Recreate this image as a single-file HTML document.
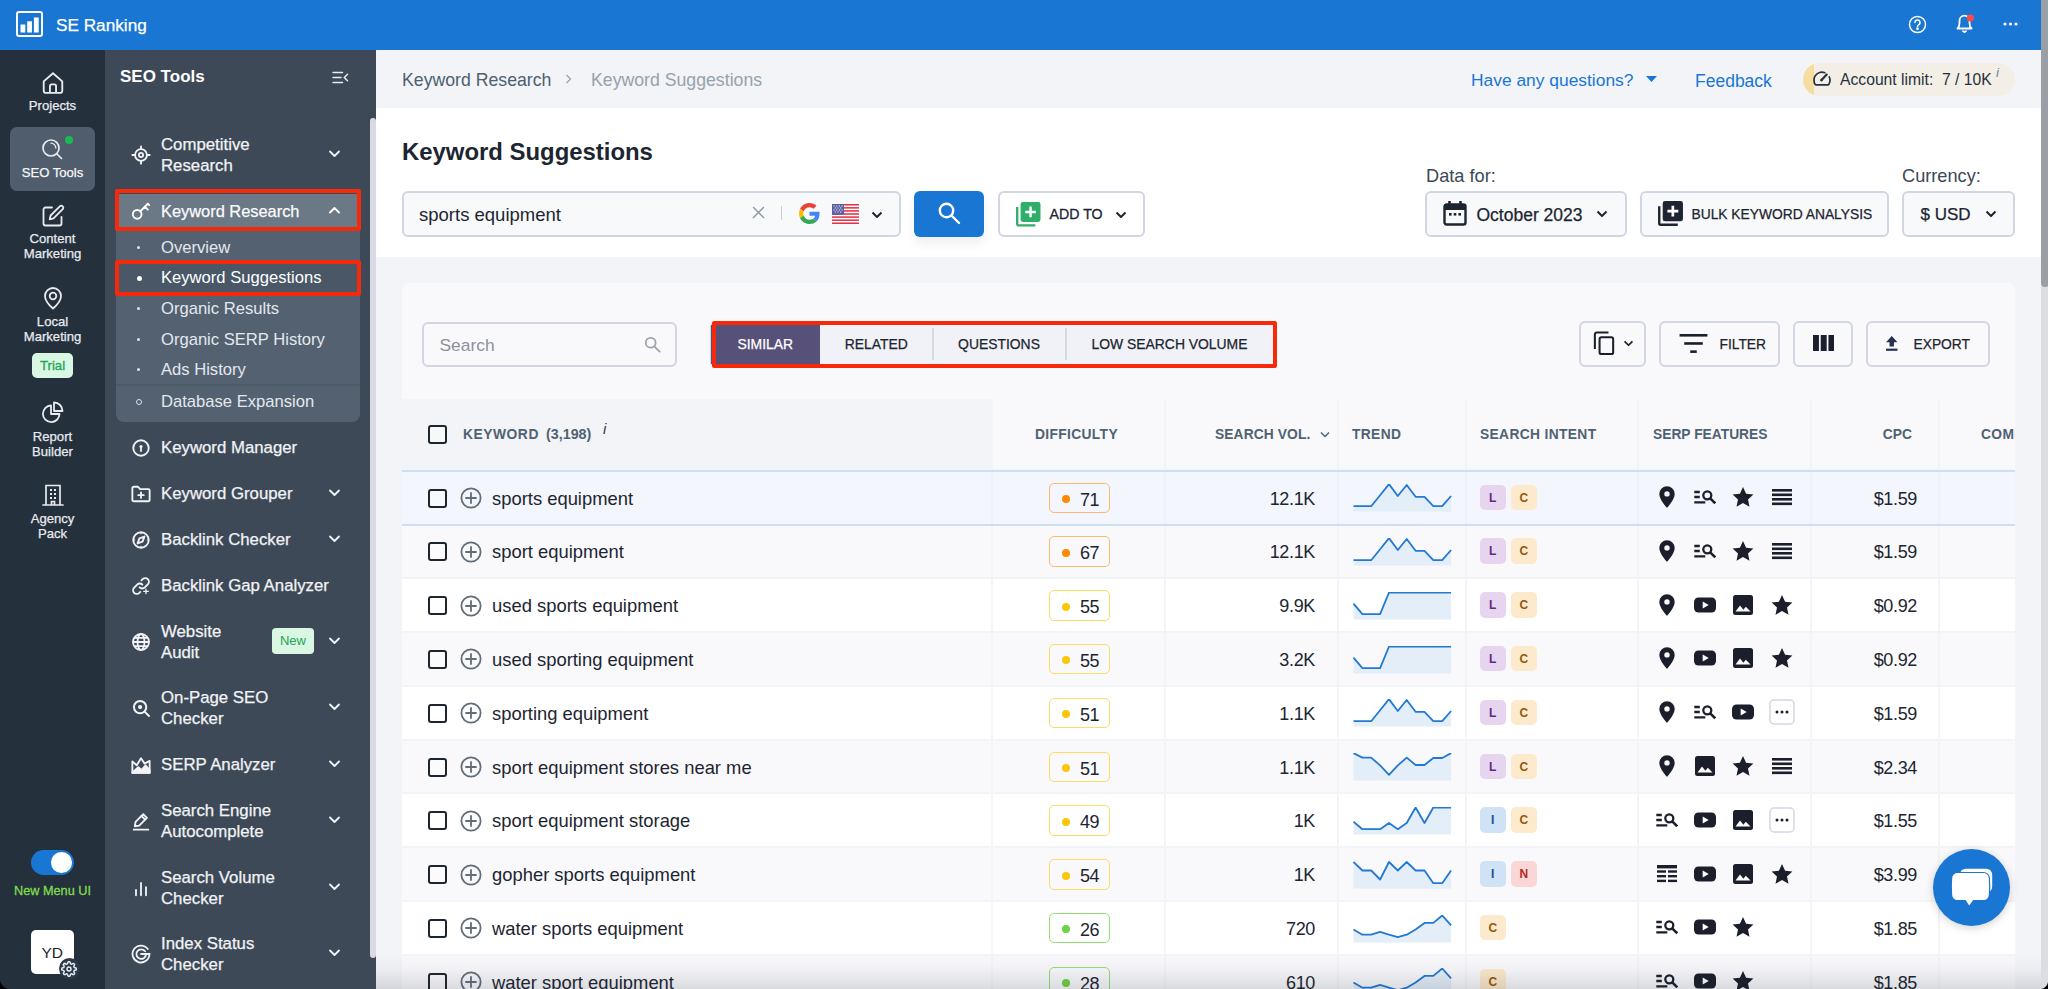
<!DOCTYPE html>
<html lang="en">
<head>
<meta charset="utf-8">
<title>Keyword Suggestions - SE Ranking</title>
<style>
*{box-sizing:border-box;margin:0;padding:0}
html,body{width:2048px;height:989px;overflow:hidden;background:#f3f4f8}
body{font-family:"Liberation Sans",sans-serif;color:#1c2530;position:relative}
svg{display:block}
.abs{position:absolute}
/* ---------- top bar ---------- */
#topbar{position:absolute;left:0;top:0;width:2041px;height:50px;background:#1976d2}
#topbar .logo{position:absolute;left:16px;top:11px;width:27px;height:26px}
#topbar .brand{position:absolute;left:56px;top:14px;font-size:17.2px;line-height:22px;color:#fff;white-space:nowrap;-webkit-text-stroke:.250px #fff}
#topbar .ticon{position:absolute;top:14px}
/* ---------- rail (left narrow sidebar) ---------- */
#rail{position:absolute;left:0;top:50px;width:105px;height:939px;background:#25303d}
#rail .item{position:absolute;left:0;width:105px;text-align:center;color:#e9ebef;font-size:13.1px;line-height:15.200px;-webkit-text-stroke:.250px #e9ebef}
#rail .item svg{margin:0 auto}
#rail .active{position:absolute;left:10px;top:76.500px;width:85px;height:64px;border-radius:7px;background:#4f5d6d}
#rail .trial{position:absolute;left:32px;top:302.500px;width:41px;height:25.500px;border-radius:5px;background:#d9f7e3;color:#22a457;font-size:13.200px;line-height:26px;text-align:center;-webkit-text-stroke:.300px #22a457}
#rail .toggle{position:absolute;left:30.500px;top:799.500px;width:43.500px;height:25.500px;border-radius:13px;background:#1976d2}
#rail .toggle i{position:absolute;right:2.200px;top:2.400px;width:20.700px;height:20.700px;border-radius:50%;background:#fff}
#rail .newui{position:absolute;left:0;top:833.500px;width:105px;text-align:center;color:#7fdc4f;font-size:12.700px;line-height:15px;-webkit-text-stroke:.300px #7fdc4f}
#rail .avatar{position:absolute;left:30.500px;top:880px;width:43.500px;height:44px;border-radius:5px;background:#fff;color:#1c2530;font-size:15.500px;line-height:46px;text-align:center}
#rail .gear{position:absolute;left:58.500px;top:908px;width:21px;height:21px;border-radius:50%;background:#2b394a}
#rail .gear svg{position:absolute;left:2.500px;top:2.500px;width:16px;height:16px}
.corner{position:absolute;bottom:0;width:10px;height:10px}
/* ---------- tools sidebar ---------- */
#tools{position:absolute;left:105px;top:50px;width:271px;height:939px;background:#3e4957}
#tools h2{position:absolute;left:15px;top:15.500px;font-size:17px;line-height:22px;font-weight:700;color:#fff;white-space:nowrap}
#tools .collapse{position:absolute;left:227px;top:21px}
#tools .sbtrack{position:absolute;left:265px;top:68px;width:6px;height:840px;border-radius:3px;background:#d9dae4}
#tools .sbwhite{position:absolute;left:265px;top:940px;width:6px;height:0;background:#fff}
.nav{list-style:none}
.nav>li{position:absolute;left:11px;width:244px;color:#f1f3f6;font-size:16.8px;line-height:20.5px;-webkit-text-stroke:.25px #f1f3f6}
.nav>li .ic{position:absolute;left:15px;top:50%;margin-top:-9.500px;width:20px;height:20px}
.nav>li .tx{position:absolute;left:45px;top:calc(50% + 1px);transform:translateY(-50%);white-space:nowrap}
.nav>li .chev{position:absolute;left:211.700px;top:50%;margin-top:-4px}
.nav .new{position:absolute;left:156px;top:50%;margin-top:-13px;width:42px;height:26px;border-radius:4px;background:#d9f7e3;color:#22a457;font-size:13px;line-height:26px;text-align:center;-webkit-text-stroke:0}
.sub{position:absolute;left:11px;top:180px;width:244px;height:192px;background:#536171;border-radius:0 0 8px 8px;list-style:none}
.sub li{position:absolute;left:0;width:244px;height:30px;color:#e4e8ee;font-size:16.6px;line-height:30px;padding-left:45px;white-space:nowrap}
.sub li b{position:absolute;left:21px;top:13px;width:3px;height:3px;border-radius:50%;background:#dfe3ea}
.redbox{position:absolute;border:3.5px solid #f7290b;border-radius:2px}

/* ---------- main ---------- */
#main{position:absolute;left:376px;top:50px;width:1665px;height:939px;background:#f3f4f8;overflow:hidden}
.crumbs{position:absolute;left:0;top:0;width:1665px;height:58px;font-size:17.7px;line-height:22px;white-space:nowrap}
.crumbs>*{position:absolute}
.crumbs .c1{left:26px;top:19px;color:#4b6070}
.crumbs .sep{left:189px;top:24px}
.crumbs .c2{left:215px;top:19px;color:#96a2ad}
.crumbs .q{left:1095px;top:19px;color:#1976d2;font-size:17.4px}
.crumbs .qcaret{left:1270px;top:26px}
.crumbs .fb{left:1319px;top:19.500px;color:#1976d2;font-size:17.5px}
.crumbs .limit{left:1427px;top:12.500px;width:212px;height:33.500px;border-radius:17px;background:#f3efe6;overflow:hidden;font-size:15.700px;line-height:34px;color:#27313e}
.limit>*{position:absolute}
.limit i{left:0;top:0;width:11px;height:34px;background:#f8dda0}
.limit svg{left:9.500px;top:8.500px}
.limit .l1{left:37px;top:0}
.limit .l2{left:139px;top:0}
.limit em{left:193px;top:-7px;font-size:13.500px;font-style:italic;color:#6b85a8}
.head{position:absolute;left:0;top:58px;width:1665px;height:149px;background:#fff}
.head>*{position:absolute}
.head h1{left:26px;top:28.500px;font-size:23.9px;line-height:30px;font-weight:700;color:#1c2530;white-space:nowrap}
.kwinput{left:25.500px;top:82.500px;width:499px;height:46px;border:2px solid #d2d5e4;border-radius:6px;background:#f8f9fb}
.kwinput>*{position:absolute}
.kwinput .val{left:15.500px;top:11.500px;font-size:18.5px;line-height:22px;color:#1c2530;white-space:nowrap}
.kwinput .x{left:348px;top:13.500px}
.kwinput .div{left:377px;top:13.500px;width:1px;height:14px;background:#c9cddb}
.kwinput .g{left:395.500px;top:10.500px}
.kwinput .flag{left:428.500px;top:11.500px}
.kwinput .cv{left:467px;top:18px}
.go{left:538px;top:82.500px;width:70px;height:46.500px;border:0;border-radius:6px;background:#1976d2;box-shadow:0 7px 10px rgba(20,40,80,.07)}
.go svg{position:absolute;left:23px;top:10px}
.btn{height:46px;top:82.500px;border:2px solid #d2d5e4;border-radius:6px;background:#f8f9fb;font-family:inherit;color:#1c2530;white-space:nowrap}
.btn>*{position:absolute}
.addto{left:621.500px;width:147px;font-size:14.200px;background:#fff;-webkit-text-stroke:.300px #1c2530}
.addto svg:first-child{left:15px;top:8px;width:26.500px;height:26.500px}
.addto span{left:50px;top:13.500px;line-height:17px}
.addto .cv{left:115px;top:18px}
.lb{top:56.500px;font-size:18.200px;line-height:22px;color:#3c4856;white-space:nowrap}
.date{left:1049px;width:202px;font-size:17.500px;-webkit-text-stroke:.250px #1c2530}
.date svg:first-child{left:16px;top:7px}
.date span{left:49.500px;top:12px;line-height:20px}
.date .cv{left:169px;top:17px}
.bulk{left:1264px;width:249px;font-size:13.800px;-webkit-text-stroke:.250px #1c2530}
.bulk svg:first-child{left:15px;top:7px}
.bulk span{left:49.500px;top:13px;line-height:17px}
.cur{left:1525.500px;width:113.500px;font-size:17px;-webkit-text-stroke:.250px #1c2530}
.cur span{left:17px;top:12px;line-height:20px}
.cur .cv{left:81px;top:17px}
/* ---------- window scrollbar ---------- */
#winsb{position:absolute;left:2041px;top:0;width:7px;height:989px;background:#dcdde2}
#winsb i{position:absolute;left:0;top:-6px;width:8px;height:293px;border-radius:4px;background:#999ea7}

/* ---------- card ---------- */
.card{position:absolute;left:26px;top:233px;width:1613px;height:720px;background:#f9f9fc;border-radius:7px 7px 0 0;overflow:hidden}
.tb{position:absolute;left:0;top:0;width:1613px;height:116px}
.tb>*{position:absolute}
.srch{left:19.500px;top:38.500px;width:255px;height:45px;border:2px solid #d3d5e3;border-radius:6px;background:#f9f9fc}
.srch span{position:absolute;left:16px;top:11.500px;font-size:17.400px;line-height:20px;color:#8b929e}
.srch svg{position:absolute;left:220px;top:12px}
.tabs{left:307.500px;top:39px;width:566px;height:45px;border:1.500px solid #d0d3e1;border-radius:4px;background:#f1f2f7;padding:1.500px 0 0 0;display:flex;font-size:13.900px;line-height:38px;color:#1c2530;text-align:center;white-space:nowrap;-webkit-text-stroke:.250px #1c2530}
.tabs a{display:block;height:39px;line-height:39.500px;position:relative}
.tabs a+a+a::before,.tabs a+a+a+a::before{content:"";position:absolute;left:-1px;top:3px;width:2px;height:32px;background:#d5d8e5}
.tabs a.on{background:#57517a;color:#fff;-webkit-text-stroke:.250px #fff}
.tbtn{top:38px;height:46px;border:2px solid #d3d6e5;border-radius:6px;background:#f9f9fc;font-family:inherit;font-size:13.800px;color:#1c2530;-webkit-text-stroke:.250px #1c2530}
.tbtn>*{position:absolute}
.tbtn span{top:13px;line-height:17px}
.thead{position:absolute;left:0;top:116px;width:1613px;height:72px;background:#f3f4f8}
.th{position:absolute;top:0;height:70px;background:#f9f9fc;font-size:13.800px;font-weight:700;color:#4f6272;letter-spacing:.350px;white-space:nowrap}
.th.kw{background:#f3f4f8}
.th span{position:absolute;top:27px;line-height:17px}
.th em{position:absolute;left:201px;top:23px;font-size:15px;line-height:14px;font-weight:400;font-style:italic;color:#2f3b48}
.cb{position:absolute;width:19px;height:19px;border:2.200px solid #1c2530;border-radius:3px;background:rgba(255,255,255,.35)}
.tbody-bg{position:absolute;left:0;top:116px;width:1613px;height:620px;background:#f3f4f8}
.tr{position:absolute;left:0;width:1613px;height:51.850px;background:#f3f4f8}
.td{position:absolute;top:0;height:51.850px;background:#fff}
.tr.alt .td{background:#f9f9fc}
.tr.hov{z-index:2;top:187px !important;height:56px;border-top:2px solid #cbdff5;border-bottom:2px solid #cbdff5;background:#eef2f9}
.tr.hov .td{background:#f3f6fc;top:-.500px;height:52.500px}
.plus{position:absolute;left:58px;top:15.500px;width:22px;height:22px}
.kwt{position:absolute;left:90px;top:16.200px;font-size:18.400px;line-height:22px;color:#1c2530;white-space:nowrap}
.num{position:absolute;top:16px;letter-spacing:-.350px;font-size:18px;line-height:22px;color:#1c2530;white-space:nowrap}
.df{position:absolute;left:56px;top:11px;width:61px;height:30.500px;border:1.500px solid;border-radius:5px;font-size:18px;letter-spacing:-.500px;line-height:33.500px;padding-left:30px;color:#1c2530}
.df b{position:absolute;left:11.500px;top:11.500px;width:8px;height:8px;border-radius:50%}
.do{border-color:#fbb972}.do b{background:#ff8a00}
.dy{border-color:#fbdc64}.dy b{background:#fac70a}
.dg{border-color:#93de73}.dg b{background:#6fd146}
.sp{position:absolute;left:14px;top:12.700px}
.in{position:absolute;top:13px;width:25.500px;height:25.500px;border-radius:5px;font-size:12px;line-height:26px;text-align:center;font-weight:700}
.iL{background:#e7d5f0;color:#5e2b88}.iC{background:#fde9cb;color:#935a0c}.iI{background:#cfe2f6;color:#1d4f8e}.iN{background:#fbd6d6;color:#b4281f}
.sf{position:absolute;top:14.500px;width:22px;height:22px}
.si{width:22px;height:22px}
.fade{position:absolute;left:0;top:903px;width:1665px;height:36px;background:linear-gradient(rgba(30,36,50,0),rgba(30,36,50,.035) 45%,rgba(30,36,50,.14))}
.chat{position:absolute;left:1557px;top:798.500px;width:77px;height:77px;border-radius:50%;background:#1976d2;box-shadow:0 2px 8px rgba(0,0,0,.18)}
.chat svg{position:absolute;left:16px;top:19px}
</style>
</head>
<body>

<!-- ================= TOP BAR ================= -->
<header id="topbar">
  <svg class="logo" viewBox="0 0 27 26"><rect x="1" y="1" width="25" height="24" rx="2" fill="none" stroke="#fff" stroke-width="2"/><rect x="4.5" y="13.5" width="4.8" height="8" fill="#fff"/><rect x="11.2" y="10.3" width="4.8" height="11.2" fill="#fff"/><rect x="17.9" y="6.5" width="4.8" height="15" fill="#fff"/></svg>
  <div class="brand">SE Ranking</div>
  <svg class="ticon" style="left:1908px;top:15px" width="19" height="19" viewBox="0 0 19 19" fill="none" stroke="#fff" stroke-width="1.5"><circle cx="9.5" cy="9.5" r="8"/><path d="M7 7.6a2.5 2.5 0 1 1 3.6 2.2c-.7.4-1.1.8-1.1 1.7" stroke-linecap="round"/><circle cx="9.5" cy="13.7" r=".6" fill="#fff"/></svg>
  <svg class="ticon" style="left:1953.500px;top:12px" width="22" height="22" viewBox="0 0 22 22" fill="none" stroke="#fff" stroke-width="1.800"><path d="M3.500 16.500h14c-1.400-1.400-2-2.800-2-5.600V8.600a5 5 0 0 0-10 0v2.300c0 2.800-.600 4.200-2 5.600z" stroke-linejoin="round"/><path d="M9 19.200c.9.900 2.100.900 3 0" stroke-linecap="round"/><circle cx="16.300" cy="6" r="3.600" fill="#ff4a4a" stroke="none"/></svg>
  <svg class="ticon" style="left:2003px;top:22px" width="15" height="4" viewBox="0 0 15 4" fill="#fff"><circle cx="2" cy="2" r="1.6"/><circle cx="7.5" cy="2" r="1.6"/><circle cx="13" cy="2" r="1.6"/></svg>
</header>

<!-- ================= RAIL ================= -->
<nav id="rail">
  <div class="active"></div>
  <div class="item" style="top:21px"><svg width="24" height="24" viewBox="0 0 22 22" fill="none" stroke="#e9ebef" stroke-width="1.7" stroke-linejoin="round"><path d="M2.500 9.500 11 2l8.500 7.500V18a2 2 0 0 1-2 2h-13a2 2 0 0 1-2-2z"/><path d="M8.200 20v-6.200a1.500 1.500 0 0 1 1.500-1.500h2.600a1.500 1.500 0 0 1 1.500 1.500V20"/></svg><div style="margin-top:3px">Projects</div></div>
  <div class="item" style="top:88px;color:#fff"><svg width="24" height="22" viewBox="0 0 24 22" fill="none" stroke="#e9ebef" stroke-width="1.700" stroke-linecap="round"><circle cx="10" cy="10" r="8"/><path d="M16 16l4.500 4.500"/><path d="M10 5.200a4.800 4.800 0 0 1 4.800 4.800" stroke-width="1.300"/></svg><div style="margin-top:5px">SEO Tools</div></div>
  <div class="abs" style="left:65px;top:86px;width:8px;height:8px;border-radius:50%;background:#1db954"></div>
  <div class="item" style="top:154px"><svg width="24" height="24" viewBox="0 0 24 24" fill="none" stroke="#e9ebef" stroke-width="1.800" stroke-linecap="round" stroke-linejoin="round"><path d="M11 3.500H4.500a2 2 0 0 0-2 2v14a2 2 0 0 0 2 2h14a2 2 0 0 0 2-2V13"/><path d="M18.800 2.300a2 2 0 0 1 2.900 2.900L12.500 14.400 8.700 15.300l.9-3.800z"/></svg><div style="margin-top:3px">Content<br>Marketing</div></div>
  <div class="item" style="top:236px"><svg width="20" height="24" viewBox="0 0 20 24" fill="none" stroke="#e9ebef" stroke-width="1.800" stroke-linejoin="round"><path d="M10 22.500s8-6.800 8-12.500a8 8 0 0 0-16 0c0 5.700 8 12.500 8 12.500z"/><circle cx="10" cy="10" r="3.300"/></svg><div style="margin-top:3.500px">Local<br>Marketing</div></div>
  <div class="trial">Trial</div>
  <div class="item" style="top:351px"><svg width="23" height="23" viewBox="0 0 23 23" fill="none" stroke="#e9ebef" stroke-width="1.800" stroke-linejoin="round"><path d="M10 4.500a8.300 8.300 0 1 0 8.500 8.500H10z"/><path d="M13 1.500V10h8.500A8.500 8.500 0 0 0 13 1.500z"/></svg><div style="margin-top:5px">Report<br>Builder</div></div>
  <div class="item" style="top:433px"><svg width="24" height="24" viewBox="0 0 24 24" fill="none" stroke="#e9ebef" stroke-width="1.700"><path d="M5 22V2.500h14V22"/><path d="M2 22h20" stroke-linecap="round"/><path d="M9 7h2M13 7h2M9 11h2M13 11h2M9 15h2M13 15h2" stroke-width="2"/><path d="M10.500 22v-3.500h3V22"/></svg><div style="margin-top:3.500px">Agency<br>Pack</div></div>
  <div class="toggle"><i></i></div>
  <div class="newui">New Menu UI</div>
  <div class="avatar">YD</div>
  <div class="gear"><svg width="16" height="16" viewBox="0 0 24 24" fill="none" stroke="#e9ebef" stroke-width="2.200" stroke-linejoin="round"><circle cx="12" cy="12" r="3"/><path d="M19.400 15a1.650 1.650 0 0 0 .33 1.820l.06.06a2 2 0 1 1-2.830 2.830l-.06-.06a1.650 1.650 0 0 0-1.820-.33 1.650 1.650 0 0 0-1 1.510V21a2 2 0 1 1-4 0v-.09A1.650 1.650 0 0 0 9 19.400a1.650 1.650 0 0 0-1.820.33l-.06.06a2 2 0 1 1-2.830-2.830l.06-.06a1.650 1.650 0 0 0 .33-1.820 1.650 1.650 0 0 0-1.510-1H3a2 2 0 1 1 0-4h.09A1.650 1.650 0 0 0 4.600 9a1.650 1.650 0 0 0-.33-1.820l-.06-.06a2 2 0 1 1 2.830-2.830l.06.06a1.650 1.650 0 0 0 1.820.33H9a1.650 1.650 0 0 0 1-1.510V3a2 2 0 1 1 4 0v.09a1.650 1.650 0 0 0 1 1.510 1.650 1.650 0 0 0 1.820-.33l.06-.06a2 2 0 1 1 2.830 2.830l-.06.06a1.650 1.650 0 0 0-.33 1.820V9a1.650 1.650 0 0 0 1.510 1H21a2 2 0 1 1 0 4h-.09a1.650 1.650 0 0 0-1.510 1z"/></svg></div>
</nav>

<!-- ================= TOOLS SIDEBAR ================= -->
<aside id="tools">
  <h2>SEO Tools</h2>
  <svg class="collapse" width="17" height="13" viewBox="0 0 17 13" fill="none" stroke="#e9ebef" stroke-width="1.500" stroke-linecap="round"><path d="M1 1.500h9.500M1 6.500h8M1 11.500h9.500M15.500 3.300 12.300 6.500l3.200 3.200"/></svg>
  <div class="sbtrack"></div>
  <ul class="nav">
    <li style="top:76px;height:56px"><svg class="ic" viewBox="0 0 22 22" fill="none" stroke="#f1f3f6" stroke-width="2.050" stroke-linecap="round"><circle cx="11" cy="11" r="6.500"/><circle cx="11" cy="11" r="2.300"/><path d="M11 1.500v3M11 17.500v3M1.500 11h3M17.500 11h3"/></svg><span class="tx">Competitive<br>Research</span><svg class="chev" width="13" height="8" viewBox="0 0 13 8" fill="none" stroke="#f1f3f6" stroke-width="1.800" stroke-linecap="round" stroke-linejoin="round"><path d="M2 1.500 6.500 6 11 1.500"/></svg></li>
    <li style="top:143.500px;height:33.500px;background:#6b7886;color:#fff;font-size:16.400px"><svg class="ic" viewBox="0 0 22 22" fill="none" stroke="#fff" stroke-width="2.050" stroke-linecap="round" stroke-linejoin="round"><circle cx="6.800" cy="14.700" r="4.800"/><path d="M10.300 11.300 18.500 3M15.300 6.200l3.200 3.200M18.500 3l1.500 1.500"/></svg><span class="tx">Keyword Research</span><svg class="chev" width="13" height="8" viewBox="0 0 13 8" fill="none" stroke="#fff" stroke-width="1.800" stroke-linecap="round" stroke-linejoin="round"><path d="M2 6.500 6.500 2 11 6.500"/></svg></li>
  </ul>
  <ul class="sub">
    <li style="top:3px"><b></b>Overview</li>
    <li style="top:33px;background:#4a5767;color:#fff"><b style="left:20.500px;top:12.500px;width:5px;height:5px;background:#fff"></b>Keyword Suggestions</li>
    <li style="top:64px"><b></b>Organic Results</li>
    <li style="top:95px"><b></b>Organic SERP History</li>
    <li style="top:125px"><b></b>Ads History</li>
    <li style="top:154px;height:37px;line-height:32px;border-top:2px solid #4c5967;border-radius:0 0 8px 8px"><b style="left:20px;top:13px;width:6px;height:6px;background:none;border:1px solid #dfe3ea"></b>Database Expansion</li>
  </ul>
  <div class="redbox" style="left:10px;top:138.800px;width:246px;height:42.500px;border-width:4px"></div>
  <div class="redbox" style="left:10px;top:210.300px;width:246px;height:36px;border-width:4px"></div>
  <ul class="nav">
    <li style="top:377px;height:40px"><svg class="ic" viewBox="0 0 22 22" fill="none" stroke="#f1f3f6" stroke-width="2.050" stroke-linecap="round"><circle cx="11" cy="11" r="8.500"/><circle cx="11" cy="9.300" r="1.700" fill="#f1f3f6" stroke="none"/><path d="M11 10v4.300" stroke-width="2"/></svg><span class="tx">Keyword Manager</span></li>
    <li style="top:423px;height:40px"><svg class="ic" viewBox="0 0 22 22" fill="none" stroke="#f1f3f6" stroke-width="2.050" stroke-linecap="round" stroke-linejoin="round"><path d="M1.500 4.500a1.500 1.500 0 0 1 1.500-1.500h4.500l2.500 2.700h9a1.500 1.500 0 0 1 1.500 1.500v10.300a1.500 1.500 0 0 1-1.500 1.500h-16a1.500 1.500 0 0 1-1.500-1.500z"/><path d="M11 9.300v6M8 12.300h6"/></svg><span class="tx">Keyword Grouper</span><svg class="chev" width="13" height="8" viewBox="0 0 13 8" fill="none" stroke="#f1f3f6" stroke-width="1.800" stroke-linecap="round" stroke-linejoin="round"><path d="M2 1.500 6.500 6 11 1.500"/></svg></li>
    <li style="top:469px;height:40px"><svg class="ic" viewBox="0 0 22 22" fill="none" stroke="#f1f3f6" stroke-width="2.050" stroke-linecap="round" stroke-linejoin="round"><circle cx="11" cy="11" r="8.500"/><path d="M14.800 7.200 12.700 12.700 7.200 14.800 9.300 9.300z"/><path d="M11 2.500v1.500M11 18v1.500M2.500 11H4M18 11h1.500" stroke-width="1.300"/></svg><span class="tx">Backlink Checker</span><svg class="chev" width="13" height="8" viewBox="0 0 13 8" fill="none" stroke="#f1f3f6" stroke-width="1.800" stroke-linecap="round" stroke-linejoin="round"><path d="M2 1.500 6.500 6 11 1.500"/></svg></li>
    <li style="top:515px;height:40px"><svg class="ic" viewBox="0 0 22 22" fill="none" stroke="#f1f3f6" stroke-width="2.050" stroke-linecap="round" stroke-linejoin="round"><path d="M9.500 12.500a4 4 0 0 0 5.700 0l3.300-3.300a4 4 0 0 0-5.700-5.700l-1.300 1.300"/><path d="M12.500 9.500a4 4 0 0 0-5.700 0l-3.300 3.300a4 4 0 0 0 5.700 5.700l1-1"/><path d="M16.500 14.500v5M14 17h5" stroke-width="1.400"/></svg><span class="tx">Backlink Gap Analyzer</span></li>
    <li style="top:563px;height:56px"><svg class="ic" viewBox="0 0 22 22" fill="none" stroke="#f1f3f6" stroke-width="1.950" stroke-linecap="round"><circle cx="11" cy="11" r="8.800"/><ellipse cx="11" cy="11" rx="3.800" ry="8.800"/><path d="M2.500 11h17M3.800 6.500h14.400M3.800 15.500h14.400"/></svg><span class="tx">Website<br>Audit</span><span class="new">New</span><svg class="chev" width="13" height="8" viewBox="0 0 13 8" fill="none" stroke="#f1f3f6" stroke-width="1.800" stroke-linecap="round" stroke-linejoin="round"><path d="M2 1.500 6.500 6 11 1.500"/></svg></li>
    <li style="top:629px;height:56px"><svg class="ic" viewBox="0 0 22 22" fill="none" stroke="#f1f3f6" stroke-width="2.200" stroke-linecap="round"><circle cx="10" cy="10" r="6.800"/><path d="M15 15l4.800 4.800"/><circle cx="10" cy="10" r="2.300" fill="#f1f3f6" stroke="none"/></svg><span class="tx">On-Page SEO<br>Checker</span><svg class="chev" width="13" height="8" viewBox="0 0 13 8" fill="none" stroke="#f1f3f6" stroke-width="1.800" stroke-linecap="round" stroke-linejoin="round"><path d="M2 1.500 6.500 6 11 1.500"/></svg></li>
    <li style="top:694px;height:40px"><svg class="ic" viewBox="0 0 22 22" fill="none" stroke="#f1f3f6" stroke-width="2.050" stroke-linejoin="round"><path d="M1.500 19.500V7l4.800 4.300L11 3.500l4 6 5.500-3v13z"/><path d="M2 19 8 13.500l3.500 3 4.500-5 4.500 5V19.500H1.500z" fill="#f1f3f6"/></svg><span class="tx">SERP Analyzer</span><svg class="chev" width="13" height="8" viewBox="0 0 13 8" fill="none" stroke="#f1f3f6" stroke-width="1.800" stroke-linecap="round" stroke-linejoin="round"><path d="M2 1.500 6.500 6 11 1.500"/></svg></li>
    <li style="top:742px;height:56px"><svg class="ic" viewBox="0 0 22 22" fill="none" stroke="#f1f3f6" stroke-width="2.050" stroke-linecap="round" stroke-linejoin="round"><path d="M13.500 3.500 17.500 7.500 9 16l-4.800.8L5 12z"/><path d="M11.500 5.500l4 4"/><path d="M3 20.500h16"/></svg><span class="tx">Search Engine<br>Autocomplete</span><svg class="chev" width="13" height="8" viewBox="0 0 13 8" fill="none" stroke="#f1f3f6" stroke-width="1.800" stroke-linecap="round" stroke-linejoin="round"><path d="M2 1.500 6.500 6 11 1.500"/></svg></li>
    <li style="top:809px;height:56px"><svg class="ic" viewBox="0 0 22 22" fill="none" stroke="#f1f3f6" stroke-width="2" stroke-linecap="round"><path d="M5.500 13v6M11 5.500V19M16.500 10v9"/></svg><span class="tx">Search Volume<br>Checker</span><svg class="chev" width="13" height="8" viewBox="0 0 13 8" fill="none" stroke="#f1f3f6" stroke-width="1.800" stroke-linecap="round" stroke-linejoin="round"><path d="M2 1.500 6.500 6 11 1.500"/></svg></li>
    <li style="top:875px;height:56px"><svg class="ic" viewBox="0 0 22 22" fill="none" stroke="#f1f3f6" stroke-width="1.950" stroke-linecap="round"><path d="M18.500 5.500a9.300 9.300 0 1 0 1.800 5.500H11"/><path d="M15.500 8a5.300 5.300 0 1 0 1 3"/></svg><span class="tx">Index Status<br>Checker</span><svg class="chev" width="13" height="8" viewBox="0 0 13 8" fill="none" stroke="#f1f3f6" stroke-width="1.800" stroke-linecap="round" stroke-linejoin="round"><path d="M2 1.500 6.500 6 11 1.500"/></svg></li>
  </ul>
</aside>

<div id="winsb"><i></i></div>
<!-- ================= MAIN ================= -->
<main id="main">
  <div class="crumbs">
    <span class="c1">Keyword Research</span>
    <svg class="sep" width="7" height="10" viewBox="0 0 7 10" fill="none" stroke="#9aa3b0" stroke-width="1.300"><path d="M1.500 1 5.500 5l-4 4"/></svg>
    <span class="c2">Keyword Suggestions</span>
    <a class="q">Have any questions?</a>
    <svg class="qcaret" width="11" height="6" viewBox="0 0 11 6"><path d="M0 0h11L5.500 6z" fill="#1976d2"/></svg>
    <a class="fb">Feedback</a>
    <div class="limit"><i></i>
      <svg width="18" height="15" viewBox="0 0 18 15" fill="none" stroke="#27313e" stroke-width="1.700" stroke-linecap="round" stroke-linejoin="round"><path d="M11.800 1.700A8 8 0 0 0 1 9.300c0 1.500.400 2.900 1.100 4 .200.400.600.600 1 .600h11.800c.400 0 .800-.200 1-.600A8 8 0 0 0 16.300 6"/><path d="M8.300 9.300 13.700 3.600" stroke-width="2.200"/><circle cx="8.600" cy="9" r="1.200" fill="#27313e" stroke="none"/></svg>
      <span class="l1">Account limit:</span><span class="l2">7 / 10K</span><em>i</em>
    </div>
  </div>
  <section class="head">
    <h1>Keyword Suggestions</h1>
    <div class="kwinput">
      <span class="val">sports equipment</span>
      <svg class="x" width="13" height="13" viewBox="0 0 13 13" stroke="#8a93a2" stroke-width="1.400" stroke-linecap="round"><path d="M1.500 1.500l10 10M11.500 1.500l-10 10"/></svg>
      <i class="div"></i>
      <svg class="g" width="21" height="21" viewBox="0 0 48 48"><path fill="#EA4335" d="M24 9.500c3.540 0 6.710 1.220 9.210 3.600l6.850-6.850C35.900 2.380 30.470 0 24 0 14.620 0 6.510 5.380 2.560 13.220l7.980 6.190C12.430 13.720 17.740 9.500 24 9.500z"/><path fill="#4285F4" d="M46.980 24.550c0-1.570-.150-3.090-.380-4.550H24v9.020h12.940c-.580 2.960-2.260 5.480-4.780 7.180l7.730 6c4.510-4.180 7.090-10.360 7.090-17.650z"/><path fill="#FBBC05" d="M10.530 28.590c-.480-1.450-.760-2.990-.760-4.590s.270-3.140.760-4.590l-7.980-6.190C.920 16.460 0 20.120 0 24c0 3.880.920 7.540 2.560 10.780l7.970-6.190z"/><path fill="#34A853" d="M24 48c6.480 0 11.930-2.130 15.890-5.810l-7.730-6c-2.150 1.450-4.920 2.300-8.160 2.300-6.260 0-11.570-4.220-13.470-9.910l-7.980 6.190C6.510 42.620 14.620 48 24 48z"/></svg>
      <svg class="flag" width="27" height="20" viewBox="0 0 27 20"><rect width="27" height="20" fill="#fff"/><g fill="#e0324b"><rect y="0" width="27" height="1.540"/><rect y="3.080" width="27" height="1.540"/><rect y="6.160" width="27" height="1.540"/><rect y="9.240" width="27" height="1.540"/><rect y="12.320" width="27" height="1.540"/><rect y="15.400" width="27" height="1.540"/><rect y="18.460" width="27" height="1.540"/></g><rect width="12" height="10.780" fill="#5b5f9e"/><g fill="#d9d9ea"><circle cx="2" cy="2" r=".7"/><circle cx="4.700" cy="2" r=".7"/><circle cx="7.400" cy="2" r=".7"/><circle cx="10.100" cy="2" r=".7"/><circle cx="3.300" cy="4" r=".7"/><circle cx="6" cy="4" r=".7"/><circle cx="8.700" cy="4" r=".7"/><circle cx="2" cy="6" r=".7"/><circle cx="4.700" cy="6" r=".7"/><circle cx="7.400" cy="6" r=".7"/><circle cx="10.100" cy="6" r=".7"/><circle cx="3.300" cy="8" r=".7"/><circle cx="6" cy="8" r=".7"/><circle cx="8.700" cy="8" r=".7"/></g></svg>
      <svg class="cv" width="12" height="8" viewBox="0 0 12 8" fill="none" stroke="#1c2530" stroke-width="2" stroke-linejoin="round"><path d="M1.500 1.500 6 6l4.500-4.500"/></svg>
    </div>
    <button class="go"><svg width="24" height="24" viewBox="0 0 24 24" fill="none" stroke="#fff" stroke-width="2.400"><circle cx="9.500" cy="9.500" r="6.700"/><path d="M14.500 14.500 22 22" stroke-linecap="round"/></svg></button>
    <button class="btn addto">
      <svg width="26" height="26" viewBox="0 0 26 26"><path d="M1 6v16.500A2.500 2.500 0 0 0 3.500 25H20v-2.300H3.300V6z" fill="#2fae6a"/><rect x="5.500" y="1" width="19.500" height="19.500" rx="2.300" fill="#2fae6a"/><path d="M15.250 5.500v10.500M10 10.750h10.500" stroke="#fff" stroke-width="2.400"/></svg>
      <span>ADD TO</span>
      <svg class="cv" width="12" height="8" viewBox="0 0 12 8" fill="none" stroke="#1c2530" stroke-width="2" stroke-linejoin="round"><path d="M1.500 1.500 6 6l4.500-4.500"/></svg>
    </button>
    <label class="lb" style="left:1050px">Data for:</label>
    <button class="btn date">
      <svg width="24" height="26" viewBox="0 0 24 26" fill="none"><rect x="1.500" y="4.500" width="21" height="20" rx="2" stroke="#1c2530" stroke-width="2.400"/><path d="M1.500 6.500a2 2 0 0 1 2-2h17a2 2 0 0 1 2 2V10h-21z" fill="#1c2530"/><path d="M6.500 1v5M17.500 1v5" stroke="#1c2530" stroke-width="2.600"/><rect x="6" y="13" width="2.600" height="2.600" fill="#1c2530"/><rect x="10.700" y="13" width="2.600" height="2.600" fill="#1c2530"/><rect x="15.400" y="13" width="2.600" height="2.600" fill="#1c2530"/></svg>
      <span>October 2023</span>
      <svg class="cv" width="12" height="8" viewBox="0 0 12 8" fill="none" stroke="#1c2530" stroke-width="2" stroke-linejoin="round"><path d="M1.500 1.500 6 6l4.500-4.500"/></svg>
    </button>
    <button class="btn bulk">
      <svg width="27" height="27" viewBox="0 0 26 26"><path d="M1 6v16.500A2.500 2.500 0 0 0 3.500 25H20v-2.300H3.300V6z" fill="#1c2530"/><rect x="5.500" y="1" width="19.500" height="19.500" rx="2.300" fill="#1c2530"/><path d="M15.250 5.500v10.500M10 10.750h10.500" stroke="#fff" stroke-width="2.600"/></svg>
      <span>BULK KEYWORD ANALYSIS</span>
    </button>
    <label class="lb" style="left:1526px">Currency:</label>
    <button class="btn cur">
      <span>$ USD</span>
      <svg class="cv" width="12" height="8" viewBox="0 0 12 8" fill="none" stroke="#1c2530" stroke-width="2" stroke-linejoin="round"><path d="M1.500 1.500 6 6l4.500-4.500"/></svg>
    </button>
  </section>
<section class="card">
  <div class="tb">
    <div class="srch"><span>Search</span><svg width="17" height="17" viewBox="0 0 19 19" fill="none" stroke="#9ba2ad" stroke-width="2"><circle cx="7.500" cy="7.500" r="5.500"/><path d="M11.500 11.500 17.500 17.500" stroke-linecap="round"/></svg></div>
    <div class="tabs"><a class="on" style="width:109.500px">SIMILAR</a><a style="width:112.500px">RELATED</a><a style="width:133px">QUESTIONS</a><a style="width:208px">LOW SEARCH VOLUME</a></div>
    <div class="redbox" style="left:310px;top:37.500px;width:565px;height:47px;border-width:4px"></div>
    <button class="tbtn" style="left:1177px;width:67px"><svg style="left:11.500px;top:8px" width="22.500" height="24.500" viewBox="0 0 24 26" fill="none" stroke="#1a1f2b" stroke-width="2.200" stroke-linejoin="round"><path d="M16.500 1.500H4a2 2 0 0 0-2 2V19"/><rect x="7" y="6.500" width="14.500" height="18" rx="2"/></svg><svg style="left:41.500px;top:17px" width="11" height="7" viewBox="0 0 12 8" fill="none" stroke="#1a1f2b" stroke-width="2" stroke-linejoin="round"><path d="M1.500 1.500 6 6l4.500-4.500"/></svg></button>
    <button class="tbtn" style="left:1257px;width:121px"><svg style="left:18px;top:11px" width="29" height="19.500" viewBox="0 0 30 21" fill="#1a1f2b"><rect x="0" y="0" width="30" height="2.800"/><rect x="5" y="8.800" width="20" height="2.800"/><rect x="11.500" y="17.600" width="7" height="2.800"/></svg><span style="left:58.500px">FILTER</span></button>
    <button class="tbtn" style="left:1391px;width:60px"><svg style="left:17.500px;top:12px" width="21.700" height="16.300" viewBox="0 0 23 18" preserveAspectRatio="none" fill="#1a1f2b"><rect x="0" y="0" width="6.300" height="18"/><rect x="8.200" y="0" width="6.300" height="18"/><rect x="16.400" y="0" width="6.300" height="18"/></svg></button>
    <button class="tbtn" style="left:1464px;width:124px"><svg style="left:17px;top:13px" width="13.500" height="15" viewBox="0 0 15 17" fill="#2a3050"><path d="M7.500 0 14 7h-4v5H5V7H1z"/><rect x="1" y="14.300" width="13" height="2.500"/></svg><span style="left:45.500px">EXPORT</span></button>
  </div>
  <div class="tbody-bg"></div>
  <div class="thead">
    <div class="th kw" style="left:0;width:589px"><i class="cb" style="left:26px;top:26px"></i><span style="left:61px;letter-spacing:.550px">KEYWORD</span><span style="left:144px;letter-spacing:0;font-size:14.300px">(3,198)</span><em>i</em></div>
    <div class="th" style="left:591px;width:170.5px"><span style="left:42px">DIFFICULTY</span></div>
    <div class="th" style="left:763.5px;width:171px"><span style="left:49.500px;letter-spacing:.100px">SEARCH VOL.</span><svg style="position:absolute;left:154.500px;top:32px" width="10" height="7" viewBox="0 0 10 7" fill="none" stroke="#4f6272" stroke-width="1.500"><path d="M1 1.500 5 5.500 9 1.500"/></svg></div>
    <div class="th" style="left:936.5px;width:126px"><span style="left:13.500px">TREND</span></div>
    <div class="th" style="left:1064.5px;width:170.2px"><span style="left:13.500px">SEARCH INTENT</span></div>
    <div class="th" style="left:1236.7px;width:171.1px"><span style="left:14.300px;letter-spacing:0">SERP FEATURES</span></div>
    <div class="th" style="left:1409.8px;width:126.2px"><span style="right:26px;letter-spacing:0">CPC</span></div>
    <div class="th" style="left:1538px;width:75px"><span style="left:41px">COMPETITION</span></div>
  </div>
  <div class="tr hov" style="top:188.50px">
    <div class="td" style="left:0;width:589px"><i class="cb" style="left:26px;top:17px"></i><svg class="plus" viewBox="0 0 22 22" fill="none" stroke="#606d7a" stroke-width="1.800"><circle cx="11" cy="11" r="9.600"/><path d="M11 6v10M6 11h10" stroke-linecap="round"/></svg><span class="kwt">sports equipment</span></div>
    <div class="td" style="left:591px;width:170.5px"><span class="df do"><b></b>71</span></div>
    <div class="td" style="left:763.5px;width:171px"><span class="num" style="right:21.500px">12.1K</span></div>
    <div class="td" style="left:936.5px;width:126px"><svg class="sp" width="99" height="28" viewBox="0 0 99 28"><polygon points="0.5,27.5 0.5,22.2 9.4,22.2 18.2,22.2 27.1,11.2 36.0,0.1 44.8,12.0 53.7,1.0 62.6,12.8 71.5,12.8 80.3,22.2 89.2,22.2 98.1,12.0 98.1,27.5" fill="#e4eef9"/><polyline points="0.5,22.2 9.4,22.2 18.2,22.2 27.1,11.2 36.0,0.1 44.8,12.0 53.7,1.0 62.6,12.8 71.5,12.8 80.3,22.2 89.2,22.2 98.1,12.0" fill="none" stroke="#2179d3" stroke-width="1.800" stroke-linejoin="round"/></svg></div>
    <div class="td" style="left:1064.5px;width:170.2px"><b class="in iL" style="left:13.5px">L</b><b class="in iC" style="left:44.5px">C</b></div>
    <div class="td" style="left:1236.7px;width:171.1px"><span class="sf" style="left:17.0px"><svg class="si" viewBox="0 0 22 22"><path d="M11 .300a7.700 7.700 0 0 0-7.700 7.700c0 5.800 7.700 13.800 7.700 13.800s7.700-8 7.700-13.800A7.700 7.700 0 0 0 11 .300zm0 10.300a2.700 2.700 0 1 1 0-5.400 2.700 2.700 0 0 1 0 5.400z" fill="#1a1f2b"/></svg></span><span class="sf" style="left:55.4px"><svg class="si" viewBox="0 0 22 22" fill="none" stroke="#1a1f2b" stroke-width="2.300"><path d="M.300 6h5.500M.300 11h5.500M.300 16.300h11"/><circle cx="13.300" cy="9.300" r="4"/><path d="M16.200 12.300l5 5" stroke-width="2.500"/></svg></span><span class="sf" style="left:93.8px"><svg class="si" viewBox="0 0 22 22"><path d="M11 1l3.100 6.700 7.300.800-5.400 5 1.500 7.200L11 17l-6.500 3.700L6 13.500.600 8.500l7.300-.800z" fill="#1a1f2b"/></svg></span><span class="sf" style="left:132.2px"><svg class="si" viewBox="0 0 22 22" fill="#1a1f2b"><rect x="1" y="3" width="20" height="2.600"/><rect x="1" y="7.500" width="20" height="2.600"/><rect x="1" y="12" width="20" height="2.600"/><rect x="1" y="16.500" width="20" height="2.600"/></svg></span></div>
    <div class="td" style="left:1409.8px;width:126.2px"><span class="num" style="right:21px">$1.59</span></div>
    <div class="td" style="left:1538px;width:75px"></div>
  </div>
  <div class="tr alt" style="top:242.30px">
    <div class="td" style="left:0;width:589px"><i class="cb" style="left:26px;top:17px"></i><svg class="plus" viewBox="0 0 22 22" fill="none" stroke="#606d7a" stroke-width="1.800"><circle cx="11" cy="11" r="9.600"/><path d="M11 6v10M6 11h10" stroke-linecap="round"/></svg><span class="kwt">sport equipment</span></div>
    <div class="td" style="left:591px;width:170.5px"><span class="df do"><b></b>67</span></div>
    <div class="td" style="left:763.5px;width:171px"><span class="num" style="right:21.500px">12.1K</span></div>
    <div class="td" style="left:936.5px;width:126px"><svg class="sp" width="99" height="28" viewBox="0 0 99 28"><polygon points="0.5,27.5 0.5,22.2 9.4,22.2 18.2,22.2 27.1,11.2 36.0,0.1 44.8,12.0 53.7,1.0 62.6,12.8 71.5,12.8 80.3,22.2 89.2,22.2 98.1,12.0 98.1,27.5" fill="#e4eef9"/><polyline points="0.5,22.2 9.4,22.2 18.2,22.2 27.1,11.2 36.0,0.1 44.8,12.0 53.7,1.0 62.6,12.8 71.5,12.8 80.3,22.2 89.2,22.2 98.1,12.0" fill="none" stroke="#2179d3" stroke-width="1.800" stroke-linejoin="round"/></svg></div>
    <div class="td" style="left:1064.5px;width:170.2px"><b class="in iL" style="left:13.5px">L</b><b class="in iC" style="left:44.5px">C</b></div>
    <div class="td" style="left:1236.7px;width:171.1px"><span class="sf" style="left:17.0px"><svg class="si" viewBox="0 0 22 22"><path d="M11 .300a7.700 7.700 0 0 0-7.700 7.700c0 5.800 7.700 13.800 7.700 13.800s7.700-8 7.700-13.800A7.700 7.700 0 0 0 11 .300zm0 10.300a2.700 2.700 0 1 1 0-5.400 2.700 2.700 0 0 1 0 5.400z" fill="#1a1f2b"/></svg></span><span class="sf" style="left:55.4px"><svg class="si" viewBox="0 0 22 22" fill="none" stroke="#1a1f2b" stroke-width="2.300"><path d="M.300 6h5.500M.300 11h5.500M.300 16.300h11"/><circle cx="13.300" cy="9.300" r="4"/><path d="M16.200 12.300l5 5" stroke-width="2.500"/></svg></span><span class="sf" style="left:93.8px"><svg class="si" viewBox="0 0 22 22"><path d="M11 1l3.100 6.700 7.300.800-5.400 5 1.500 7.200L11 17l-6.500 3.700L6 13.500.600 8.500l7.300-.800z" fill="#1a1f2b"/></svg></span><span class="sf" style="left:132.2px"><svg class="si" viewBox="0 0 22 22" fill="#1a1f2b"><rect x="1" y="3" width="20" height="2.600"/><rect x="1" y="7.500" width="20" height="2.600"/><rect x="1" y="12" width="20" height="2.600"/><rect x="1" y="16.500" width="20" height="2.600"/></svg></span></div>
    <div class="td" style="left:1409.8px;width:126.2px"><span class="num" style="right:21px">$1.59</span></div>
    <div class="td" style="left:1538px;width:75px"></div>
  </div>
  <div class="tr" style="top:296.10px">
    <div class="td" style="left:0;width:589px"><i class="cb" style="left:26px;top:17px"></i><svg class="plus" viewBox="0 0 22 22" fill="none" stroke="#606d7a" stroke-width="1.800"><circle cx="11" cy="11" r="9.600"/><path d="M11 6v10M6 11h10" stroke-linecap="round"/></svg><span class="kwt">used sports equipment</span></div>
    <div class="td" style="left:591px;width:170.5px"><span class="df dy"><b></b>55</span></div>
    <div class="td" style="left:763.5px;width:171px"><span class="num" style="right:21.500px">9.9K</span></div>
    <div class="td" style="left:936.5px;width:126px"><svg class="sp" width="99" height="28" viewBox="0 0 99 28"><polygon points="0.5,27.5 0.5,11.6 9.4,22.2 18.2,22.2 27.1,22.2 36.0,0.5 44.8,0.5 53.7,0.5 62.6,0.5 71.5,0.5 80.3,0.5 89.2,0.5 98.1,0.5 98.1,27.5" fill="#e4eef9"/><polyline points="0.5,11.6 9.4,22.2 18.2,22.2 27.1,22.2 36.0,0.5 44.8,0.5 53.7,0.5 62.6,0.5 71.5,0.5 80.3,0.5 89.2,0.5 98.1,0.5" fill="none" stroke="#2179d3" stroke-width="1.800" stroke-linejoin="round"/></svg></div>
    <div class="td" style="left:1064.5px;width:170.2px"><b class="in iL" style="left:13.5px">L</b><b class="in iC" style="left:44.5px">C</b></div>
    <div class="td" style="left:1236.7px;width:171.1px"><span class="sf" style="left:17.0px"><svg class="si" viewBox="0 0 22 22"><path d="M11 .300a7.700 7.700 0 0 0-7.700 7.700c0 5.800 7.700 13.800 7.700 13.800s7.700-8 7.700-13.800A7.700 7.700 0 0 0 11 .300zm0 10.300a2.700 2.700 0 1 1 0-5.400 2.700 2.700 0 0 1 0 5.400z" fill="#1a1f2b"/></svg></span><span class="sf" style="left:55.4px"><svg class="si" viewBox="0 0 22 22"><rect x="0" y="3.500" width="22" height="15" rx="4.500" fill="#1a1f2b"/><path d="M8.700 7.500v7l6-3.500z" fill="#fff"/></svg></span><span class="sf" style="left:93.8px"><svg class="si" viewBox="0 0 22 22"><rect x="1" y="1" width="20" height="20" rx="2.500" fill="#1a1f2b"/><path d="M3.500 17.500l4.500-6 3.400 4.200 2.400-3 4.700 4.800z" fill="#fff"/></svg></span><span class="sf" style="left:132.2px"><svg class="si" viewBox="0 0 22 22"><path d="M11 1l3.100 6.700 7.300.800-5.400 5 1.500 7.200L11 17l-6.500 3.700L6 13.500.600 8.500l7.300-.800z" fill="#1a1f2b"/></svg></span></div>
    <div class="td" style="left:1409.8px;width:126.2px"><span class="num" style="right:21px">$0.92</span></div>
    <div class="td" style="left:1538px;width:75px"></div>
  </div>
  <div class="tr alt" style="top:349.90px">
    <div class="td" style="left:0;width:589px"><i class="cb" style="left:26px;top:17px"></i><svg class="plus" viewBox="0 0 22 22" fill="none" stroke="#606d7a" stroke-width="1.800"><circle cx="11" cy="11" r="9.600"/><path d="M11 6v10M6 11h10" stroke-linecap="round"/></svg><span class="kwt">used sporting equipment</span></div>
    <div class="td" style="left:591px;width:170.5px"><span class="df dy"><b></b>55</span></div>
    <div class="td" style="left:763.5px;width:171px"><span class="num" style="right:21.500px">3.2K</span></div>
    <div class="td" style="left:936.5px;width:126px"><svg class="sp" width="99" height="28" viewBox="0 0 99 28"><polygon points="0.5,27.5 0.5,11.6 9.4,22.2 18.2,22.2 27.1,22.2 36.0,0.5 44.8,0.5 53.7,0.5 62.6,0.5 71.5,0.5 80.3,0.5 89.2,0.5 98.1,0.5 98.1,27.5" fill="#e4eef9"/><polyline points="0.5,11.6 9.4,22.2 18.2,22.2 27.1,22.2 36.0,0.5 44.8,0.5 53.7,0.5 62.6,0.5 71.5,0.5 80.3,0.5 89.2,0.5 98.1,0.5" fill="none" stroke="#2179d3" stroke-width="1.800" stroke-linejoin="round"/></svg></div>
    <div class="td" style="left:1064.5px;width:170.2px"><b class="in iL" style="left:13.5px">L</b><b class="in iC" style="left:44.5px">C</b></div>
    <div class="td" style="left:1236.7px;width:171.1px"><span class="sf" style="left:17.0px"><svg class="si" viewBox="0 0 22 22"><path d="M11 .300a7.700 7.700 0 0 0-7.700 7.700c0 5.800 7.700 13.800 7.700 13.800s7.700-8 7.700-13.800A7.700 7.700 0 0 0 11 .300zm0 10.300a2.700 2.700 0 1 1 0-5.400 2.700 2.700 0 0 1 0 5.400z" fill="#1a1f2b"/></svg></span><span class="sf" style="left:55.4px"><svg class="si" viewBox="0 0 22 22"><rect x="0" y="3.500" width="22" height="15" rx="4.500" fill="#1a1f2b"/><path d="M8.700 7.500v7l6-3.500z" fill="#fff"/></svg></span><span class="sf" style="left:93.8px"><svg class="si" viewBox="0 0 22 22"><rect x="1" y="1" width="20" height="20" rx="2.500" fill="#1a1f2b"/><path d="M3.500 17.500l4.500-6 3.400 4.200 2.400-3 4.700 4.800z" fill="#fff"/></svg></span><span class="sf" style="left:132.2px"><svg class="si" viewBox="0 0 22 22"><path d="M11 1l3.100 6.700 7.300.800-5.400 5 1.500 7.200L11 17l-6.500 3.700L6 13.500.600 8.500l7.300-.800z" fill="#1a1f2b"/></svg></span></div>
    <div class="td" style="left:1409.8px;width:126.2px"><span class="num" style="right:21px">$0.92</span></div>
    <div class="td" style="left:1538px;width:75px"></div>
  </div>
  <div class="tr" style="top:403.70px">
    <div class="td" style="left:0;width:589px"><i class="cb" style="left:26px;top:17px"></i><svg class="plus" viewBox="0 0 22 22" fill="none" stroke="#606d7a" stroke-width="1.800"><circle cx="11" cy="11" r="9.600"/><path d="M11 6v10M6 11h10" stroke-linecap="round"/></svg><span class="kwt">sporting equipment</span></div>
    <div class="td" style="left:591px;width:170.5px"><span class="df dy"><b></b>51</span></div>
    <div class="td" style="left:763.5px;width:171px"><span class="num" style="right:21.500px">1.1K</span></div>
    <div class="td" style="left:936.5px;width:126px"><svg class="sp" width="99" height="28" viewBox="0 0 99 28"><polygon points="0.5,27.5 0.5,22.2 9.4,22.2 18.2,22.2 27.1,11.2 36.0,0.1 44.8,12.0 53.7,1.0 62.6,12.8 71.5,12.8 80.3,22.2 89.2,22.2 98.1,12.0 98.1,27.5" fill="#e4eef9"/><polyline points="0.5,22.2 9.4,22.2 18.2,22.2 27.1,11.2 36.0,0.1 44.8,12.0 53.7,1.0 62.6,12.8 71.5,12.8 80.3,22.2 89.2,22.2 98.1,12.0" fill="none" stroke="#2179d3" stroke-width="1.800" stroke-linejoin="round"/></svg></div>
    <div class="td" style="left:1064.5px;width:170.2px"><b class="in iL" style="left:13.5px">L</b><b class="in iC" style="left:44.5px">C</b></div>
    <div class="td" style="left:1236.7px;width:171.1px"><span class="sf" style="left:17.0px"><svg class="si" viewBox="0 0 22 22"><path d="M11 .300a7.700 7.700 0 0 0-7.700 7.700c0 5.800 7.700 13.800 7.700 13.800s7.700-8 7.700-13.800A7.700 7.700 0 0 0 11 .300zm0 10.300a2.700 2.700 0 1 1 0-5.400 2.700 2.700 0 0 1 0 5.400z" fill="#1a1f2b"/></svg></span><span class="sf" style="left:55.4px"><svg class="si" viewBox="0 0 22 22" fill="none" stroke="#1a1f2b" stroke-width="2.300"><path d="M.300 6h5.500M.300 11h5.500M.300 16.300h11"/><circle cx="13.300" cy="9.300" r="4"/><path d="M16.200 12.300l5 5" stroke-width="2.500"/></svg></span><span class="sf" style="left:93.8px"><svg class="si" viewBox="0 0 22 22"><rect x="0" y="3.500" width="22" height="15" rx="4.500" fill="#1a1f2b"/><path d="M8.700 7.500v7l6-3.500z" fill="#fff"/></svg></span><span class="sf" style="left:132.2px"><svg class="si" style="width:26px;height:26px;margin:-2px" viewBox="0 0 26 26"><rect x="1" y="1" width="24" height="24" rx="4" fill="#fff" stroke="#d3d6e4" stroke-width="1.500"/><circle cx="8" cy="13" r="1.500" fill="#1a1f2b"/><circle cx="13" cy="13" r="1.500" fill="#1a1f2b"/><circle cx="18" cy="13" r="1.500" fill="#1a1f2b"/></svg></span></div>
    <div class="td" style="left:1409.8px;width:126.2px"><span class="num" style="right:21px">$1.59</span></div>
    <div class="td" style="left:1538px;width:75px"></div>
  </div>
  <div class="tr alt" style="top:457.50px">
    <div class="td" style="left:0;width:589px"><i class="cb" style="left:26px;top:17px"></i><svg class="plus" viewBox="0 0 22 22" fill="none" stroke="#606d7a" stroke-width="1.800"><circle cx="11" cy="11" r="9.600"/><path d="M11 6v10M6 11h10" stroke-linecap="round"/></svg><span class="kwt">sport equipment stores near me</span></div>
    <div class="td" style="left:591px;width:170.5px"><span class="df dy"><b></b>51</span></div>
    <div class="td" style="left:763.5px;width:171px"><span class="num" style="right:21.500px">1.1K</span></div>
    <div class="td" style="left:936.5px;width:126px"><svg class="sp" width="99" height="28" viewBox="0 0 99 28"><polygon points="0.5,27.5 0.5,0.1 9.4,4.6 18.2,4.6 27.1,12.4 36.0,21.8 44.8,12.4 53.7,4.6 62.6,12.0 71.5,12.0 80.3,5.0 89.2,5.0 98.1,0.1 98.1,27.5" fill="#e4eef9"/><polyline points="0.5,0.1 9.4,4.6 18.2,4.6 27.1,12.4 36.0,21.8 44.8,12.4 53.7,4.6 62.6,12.0 71.5,12.0 80.3,5.0 89.2,5.0 98.1,0.1" fill="none" stroke="#2179d3" stroke-width="1.800" stroke-linejoin="round"/></svg></div>
    <div class="td" style="left:1064.5px;width:170.2px"><b class="in iL" style="left:13.5px">L</b><b class="in iC" style="left:44.5px">C</b></div>
    <div class="td" style="left:1236.7px;width:171.1px"><span class="sf" style="left:17.0px"><svg class="si" viewBox="0 0 22 22"><path d="M11 .300a7.700 7.700 0 0 0-7.700 7.700c0 5.800 7.700 13.800 7.700 13.800s7.700-8 7.700-13.800A7.700 7.700 0 0 0 11 .300zm0 10.300a2.700 2.700 0 1 1 0-5.400 2.700 2.700 0 0 1 0 5.400z" fill="#1a1f2b"/></svg></span><span class="sf" style="left:55.4px"><svg class="si" viewBox="0 0 22 22"><rect x="1" y="1" width="20" height="20" rx="2.500" fill="#1a1f2b"/><path d="M3.500 17.500l4.500-6 3.400 4.200 2.400-3 4.700 4.800z" fill="#fff"/></svg></span><span class="sf" style="left:93.8px"><svg class="si" viewBox="0 0 22 22"><path d="M11 1l3.100 6.700 7.300.800-5.400 5 1.500 7.200L11 17l-6.500 3.700L6 13.500.600 8.500l7.300-.800z" fill="#1a1f2b"/></svg></span><span class="sf" style="left:132.2px"><svg class="si" viewBox="0 0 22 22" fill="#1a1f2b"><rect x="1" y="3" width="20" height="2.600"/><rect x="1" y="7.500" width="20" height="2.600"/><rect x="1" y="12" width="20" height="2.600"/><rect x="1" y="16.500" width="20" height="2.600"/></svg></span></div>
    <div class="td" style="left:1409.8px;width:126.2px"><span class="num" style="right:21px">$2.34</span></div>
    <div class="td" style="left:1538px;width:75px"></div>
  </div>
  <div class="tr" style="top:511.30px">
    <div class="td" style="left:0;width:589px"><i class="cb" style="left:26px;top:17px"></i><svg class="plus" viewBox="0 0 22 22" fill="none" stroke="#606d7a" stroke-width="1.800"><circle cx="11" cy="11" r="9.600"/><path d="M11 6v10M6 11h10" stroke-linecap="round"/></svg><span class="kwt">sport equipment storage</span></div>
    <div class="td" style="left:591px;width:170.5px"><span class="df dy"><b></b>49</span></div>
    <div class="td" style="left:763.5px;width:171px"><span class="num" style="right:21.500px">1K</span></div>
    <div class="td" style="left:936.5px;width:126px"><svg class="sp" width="99" height="28" viewBox="0 0 99 28"><polygon points="0.5,27.5 0.5,14.8 9.4,22.2 18.2,22.2 27.1,22.2 36.0,16.0 44.8,22.2 53.7,16.0 62.6,0.5 71.5,16.0 80.3,0.5 89.2,0.5 98.1,0.5 98.1,27.5" fill="#e4eef9"/><polyline points="0.5,14.8 9.4,22.2 18.2,22.2 27.1,22.2 36.0,16.0 44.8,22.2 53.7,16.0 62.6,0.5 71.5,16.0 80.3,0.5 89.2,0.5 98.1,0.5" fill="none" stroke="#2179d3" stroke-width="1.800" stroke-linejoin="round"/></svg></div>
    <div class="td" style="left:1064.5px;width:170.2px"><b class="in iI" style="left:13.5px">I</b><b class="in iC" style="left:44.5px">C</b></div>
    <div class="td" style="left:1236.7px;width:171.1px"><span class="sf" style="left:17.0px"><svg class="si" viewBox="0 0 22 22" fill="none" stroke="#1a1f2b" stroke-width="2.300"><path d="M.300 6h5.500M.300 11h5.500M.300 16.300h11"/><circle cx="13.300" cy="9.300" r="4"/><path d="M16.200 12.300l5 5" stroke-width="2.500"/></svg></span><span class="sf" style="left:55.4px"><svg class="si" viewBox="0 0 22 22"><rect x="0" y="3.500" width="22" height="15" rx="4.500" fill="#1a1f2b"/><path d="M8.700 7.500v7l6-3.500z" fill="#fff"/></svg></span><span class="sf" style="left:93.8px"><svg class="si" viewBox="0 0 22 22"><rect x="1" y="1" width="20" height="20" rx="2.500" fill="#1a1f2b"/><path d="M3.500 17.500l4.500-6 3.400 4.200 2.400-3 4.700 4.800z" fill="#fff"/></svg></span><span class="sf" style="left:132.2px"><svg class="si" style="width:26px;height:26px;margin:-2px" viewBox="0 0 26 26"><rect x="1" y="1" width="24" height="24" rx="4" fill="#fff" stroke="#d3d6e4" stroke-width="1.500"/><circle cx="8" cy="13" r="1.500" fill="#1a1f2b"/><circle cx="13" cy="13" r="1.500" fill="#1a1f2b"/><circle cx="18" cy="13" r="1.500" fill="#1a1f2b"/></svg></span></div>
    <div class="td" style="left:1409.8px;width:126.2px"><span class="num" style="right:21px">$1.55</span></div>
    <div class="td" style="left:1538px;width:75px"></div>
  </div>
  <div class="tr alt" style="top:565.10px">
    <div class="td" style="left:0;width:589px"><i class="cb" style="left:26px;top:17px"></i><svg class="plus" viewBox="0 0 22 22" fill="none" stroke="#606d7a" stroke-width="1.800"><circle cx="11" cy="11" r="9.600"/><path d="M11 6v10M6 11h10" stroke-linecap="round"/></svg><span class="kwt">gopher sports equipment</span></div>
    <div class="td" style="left:591px;width:170.5px"><span class="df dy"><b></b>54</span></div>
    <div class="td" style="left:763.5px;width:171px"><span class="num" style="right:21.500px">1K</span></div>
    <div class="td" style="left:936.5px;width:126px"><svg class="sp" width="99" height="28" viewBox="0 0 99 28"><polygon points="0.5,27.5 0.5,1.0 9.4,9.5 18.2,9.5 27.1,18.5 36.0,1.0 44.8,9.5 53.7,1.0 62.6,9.5 71.5,9.5 80.3,22.2 89.2,22.2 98.1,9.5 98.1,27.5" fill="#e4eef9"/><polyline points="0.5,1.0 9.4,9.5 18.2,9.5 27.1,18.5 36.0,1.0 44.8,9.5 53.7,1.0 62.6,9.5 71.5,9.5 80.3,22.2 89.2,22.2 98.1,9.5" fill="none" stroke="#2179d3" stroke-width="1.800" stroke-linejoin="round"/></svg></div>
    <div class="td" style="left:1064.5px;width:170.2px"><b class="in iI" style="left:13.5px">I</b><b class="in iN" style="left:44.5px">N</b></div>
    <div class="td" style="left:1236.7px;width:171.1px"><span class="sf" style="left:17.0px"><svg class="si" viewBox="0 0 22 22" fill="#1a1f2b"><rect x="1" y="2" width="20" height="3.400"/><rect x="1" y="7.300" width="9" height="2.400"/><rect x="12" y="7.300" width="9" height="2.400"/><rect x="1" y="12" width="9" height="2.400"/><rect x="12" y="12" width="9" height="2.400"/><rect x="1" y="16.700" width="9" height="2.400"/><rect x="12" y="16.700" width="9" height="2.400"/></svg></span><span class="sf" style="left:55.4px"><svg class="si" viewBox="0 0 22 22"><rect x="0" y="3.500" width="22" height="15" rx="4.500" fill="#1a1f2b"/><path d="M8.700 7.500v7l6-3.500z" fill="#fff"/></svg></span><span class="sf" style="left:93.8px"><svg class="si" viewBox="0 0 22 22"><rect x="1" y="1" width="20" height="20" rx="2.500" fill="#1a1f2b"/><path d="M3.500 17.500l4.500-6 3.400 4.200 2.400-3 4.700 4.800z" fill="#fff"/></svg></span><span class="sf" style="left:132.2px"><svg class="si" viewBox="0 0 22 22"><path d="M11 1l3.100 6.700 7.300.800-5.400 5 1.500 7.200L11 17l-6.500 3.700L6 13.500.600 8.500l7.300-.800z" fill="#1a1f2b"/></svg></span></div>
    <div class="td" style="left:1409.8px;width:126.2px"><span class="num" style="right:21px">$3.99</span></div>
    <div class="td" style="left:1538px;width:75px"></div>
  </div>
  <div class="tr" style="top:618.90px">
    <div class="td" style="left:0;width:589px"><i class="cb" style="left:26px;top:17px"></i><svg class="plus" viewBox="0 0 22 22" fill="none" stroke="#606d7a" stroke-width="1.800"><circle cx="11" cy="11" r="9.600"/><path d="M11 6v10M6 11h10" stroke-linecap="round"/></svg><span class="kwt">water sports equipment</span></div>
    <div class="td" style="left:591px;width:170.5px"><span class="df dg"><b></b>26</span></div>
    <div class="td" style="left:763.5px;width:171px"><span class="num" style="right:21.500px">720</span></div>
    <div class="td" style="left:936.5px;width:126px"><svg class="sp" width="99" height="28" viewBox="0 0 99 28"><polygon points="0.5,27.5 0.5,14.4 9.4,19.7 18.2,19.7 27.1,16.9 36.0,19.7 44.8,22.2 53.7,19.7 62.6,14.4 71.5,7.9 80.3,7.9 89.2,0.5 98.1,10.3 98.1,27.5" fill="#e4eef9"/><polyline points="0.5,14.4 9.4,19.7 18.2,19.7 27.1,16.9 36.0,19.7 44.8,22.2 53.7,19.7 62.6,14.4 71.5,7.9 80.3,7.9 89.2,0.5 98.1,10.3" fill="none" stroke="#2179d3" stroke-width="1.800" stroke-linejoin="round"/></svg></div>
    <div class="td" style="left:1064.5px;width:170.2px"><b class="in iC" style="left:13.5px">C</b></div>
    <div class="td" style="left:1236.7px;width:171.1px"><span class="sf" style="left:17.0px"><svg class="si" viewBox="0 0 22 22" fill="none" stroke="#1a1f2b" stroke-width="2.300"><path d="M.300 6h5.500M.300 11h5.500M.300 16.300h11"/><circle cx="13.300" cy="9.300" r="4"/><path d="M16.200 12.300l5 5" stroke-width="2.500"/></svg></span><span class="sf" style="left:55.4px"><svg class="si" viewBox="0 0 22 22"><rect x="0" y="3.500" width="22" height="15" rx="4.500" fill="#1a1f2b"/><path d="M8.700 7.500v7l6-3.500z" fill="#fff"/></svg></span><span class="sf" style="left:93.8px"><svg class="si" viewBox="0 0 22 22"><path d="M11 1l3.100 6.700 7.300.800-5.400 5 1.500 7.200L11 17l-6.500 3.700L6 13.500.600 8.500l7.300-.800z" fill="#1a1f2b"/></svg></span></div>
    <div class="td" style="left:1409.8px;width:126.2px"><span class="num" style="right:21px">$1.85</span></div>
    <div class="td" style="left:1538px;width:75px"></div>
  </div>
  <div class="tr alt" style="top:672.70px">
    <div class="td" style="left:0;width:589px"><i class="cb" style="left:26px;top:17px"></i><svg class="plus" viewBox="0 0 22 22" fill="none" stroke="#606d7a" stroke-width="1.800"><circle cx="11" cy="11" r="9.600"/><path d="M11 6v10M6 11h10" stroke-linecap="round"/></svg><span class="kwt">water sport equipment</span></div>
    <div class="td" style="left:591px;width:170.5px"><span class="df dg"><b></b>28</span></div>
    <div class="td" style="left:763.5px;width:171px"><span class="num" style="right:21.500px">610</span></div>
    <div class="td" style="left:936.5px;width:126px"><svg class="sp" width="99" height="28" viewBox="0 0 99 28"><polygon points="0.5,27.5 0.5,14.4 9.4,19.7 18.2,19.7 27.1,16.9 36.0,19.7 44.8,22.2 53.7,19.7 62.6,14.4 71.5,7.9 80.3,7.9 89.2,0.5 98.1,10.3 98.1,27.5" fill="#e4eef9"/><polyline points="0.5,14.4 9.4,19.7 18.2,19.7 27.1,16.9 36.0,19.7 44.8,22.2 53.7,19.7 62.6,14.4 71.5,7.9 80.3,7.9 89.2,0.5 98.1,10.3" fill="none" stroke="#2179d3" stroke-width="1.800" stroke-linejoin="round"/></svg></div>
    <div class="td" style="left:1064.5px;width:170.2px"><b class="in iC" style="left:13.5px">C</b></div>
    <div class="td" style="left:1236.7px;width:171.1px"><span class="sf" style="left:17.0px"><svg class="si" viewBox="0 0 22 22" fill="none" stroke="#1a1f2b" stroke-width="2.300"><path d="M.300 6h5.500M.300 11h5.500M.300 16.300h11"/><circle cx="13.300" cy="9.300" r="4"/><path d="M16.200 12.300l5 5" stroke-width="2.500"/></svg></span><span class="sf" style="left:55.4px"><svg class="si" viewBox="0 0 22 22"><rect x="0" y="3.500" width="22" height="15" rx="4.500" fill="#1a1f2b"/><path d="M8.700 7.500v7l6-3.500z" fill="#fff"/></svg></span><span class="sf" style="left:93.8px"><svg class="si" viewBox="0 0 22 22"><path d="M11 1l3.100 6.700 7.300.800-5.400 5 1.500 7.200L11 17l-6.500 3.700L6 13.500.600 8.500l7.300-.800z" fill="#1a1f2b"/></svg></span></div>
    <div class="td" style="left:1409.8px;width:126.2px"><span class="num" style="right:21px">$1.85</span></div>
    <div class="td" style="left:1538px;width:75px"></div>
  </div>
</section>
  <div class="fade"></div>
  <div class="chat"><svg width="46" height="40" viewBox="0 0 46 40"><rect x="10.800" y=".800" width="32.400" height="24" rx="6" fill="#fff"/><path d="M8.500 5.100h26a5.300 5.300 0 0 1 5.300 5c.400 5.700.400 11.300 0 17a5.300 5.300 0 0 1-5.300 5H24.200l-4 5.400-3.600-5.400H8.500a5.300 5.300 0 0 1-5.300-5c-.400-5.700-.400-11.300 0-17a5.300 5.300 0 0 1 5.300-5z" fill="#fff" stroke="#1976d2" stroke-width="2.400" paint-order="stroke"/></svg></div>
</main>

<div class="corner" style="left:0;background:radial-gradient(circle at 100% 0,rgba(0,0,0,0) 9.500px,#000 10.500px)"></div>
<div class="corner" style="left:2040px;width:8px;height:8px;background:radial-gradient(circle at 0 0,rgba(0,0,0,0) 7.500px,#000 8.500px)"></div>
</body>
</html>
